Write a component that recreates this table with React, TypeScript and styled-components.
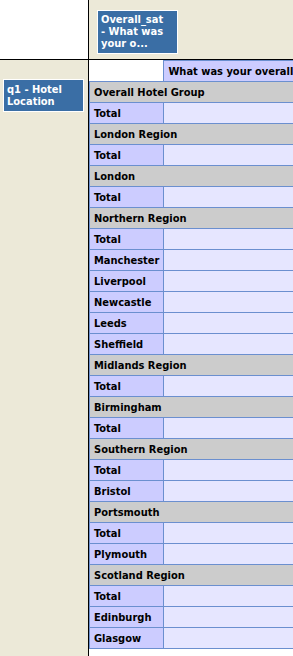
import React from "react";
import styled, { createGlobalStyle } from "styled-components";

const GlobalStyle = createGlobalStyle`
  html, body {
    margin: 0;
    padding: 0;
    overflow: hidden;
    background: #ffffff;
  }
  body {
    font-family: "DejaVu Sans Condensed", "DejaVu Sans", Tahoma, sans-serif;
    font-stretch: condensed;
    font-size: 11px;
  }
`;

const Layout = styled.div`
  display: grid;
  grid-template-columns: 89px 1fr;
  grid-template-rows: 60px 1fr;
  width: 293px;
  height: 656px;
  overflow: hidden;
`;

const Corner = styled.div`
  box-sizing: border-box;
  background: #ffffff;
  border-right: 1px solid #000000;
  border-bottom: 1px solid #000000;
`;

const ColumnZone = styled.div`
  box-sizing: border-box;
  background: #ece9d8;
  border-bottom: 1px solid #000000;
  padding: 10px 0 0 8px;
  overflow: hidden;
`;

const RowZone = styled.div`
  box-sizing: border-box;
  background: #ece9d8;
  border-right: 1px solid #000000;
  padding: 19px 0 0 3px;
`;

const FieldChip = styled.div<{ $top?: number; $bottom?: number }>`
  box-sizing: border-box;
  width: 81px;
  background: #3a6ea5;
  border: 1px solid #ffffff;
  color: #ffffff;
  font-weight: bold;
  line-height: 12px;
  padding: ${(p) => p.$top ?? 3}px 3px ${(p) => p.$bottom ?? 3}px 3px;
  white-space: nowrap;
  overflow: hidden;
`;

const ChipLine = styled.span`
  display: block;
`;

const BodyZone = styled.div`
  background: #ffffff;
  overflow: hidden;
`;

const Grid = styled.table`
  border-collapse: collapse;
  border-spacing: 0;
  font-weight: bold;
  color: #000000;
`;

const BlankCell = styled.td`
  width: 66px;
  height: 20px;
  padding: 0 4px;
  border: none;
  background: #ffffff;
`;

const HeadCell = styled.td`
  height: 20px;
  padding: 0 4px;
  border: 1px solid #6b8fcf;
  background: #ccccff;
  white-space: nowrap;
`;

const GroupCell = styled.td`
  height: 20px;
  padding: 0 4px;
  border: 1px solid #6b8fcf;
  background: #cccccc;
  white-space: nowrap;
`;

const LabelCell = styled.td`
  width: 66px;
  height: 20px;
  padding: 0 4px;
  border: 1px solid #6b8fcf;
  background: #ccccff;
  white-space: nowrap;
`;

const ValueCell = styled.td`
  height: 20px;
  padding: 0 4px;
  border: 1px solid #6b8fcf;
  background: #e6e6ff;
`;

const Footnote = styled.div`
  padding: 7px 0 0 58px;
  font-weight: normal;
  color: #555555;
  white-space: nowrap;
`;

type Row = { kind: "group" | "item"; label: string };

const rows: Row[] = [
  { kind: "group", label: "Overall Hotel Group" },
  { kind: "item", label: "Total" },
  { kind: "group", label: "London Region" },
  { kind: "item", label: "Total" },
  { kind: "group", label: "London" },
  { kind: "item", label: "Total" },
  { kind: "group", label: "Northern Region" },
  { kind: "item", label: "Total" },
  { kind: "item", label: "Manchester" },
  { kind: "item", label: "Liverpool" },
  { kind: "item", label: "Newcastle" },
  { kind: "item", label: "Leeds" },
  { kind: "item", label: "Sheffield" },
  { kind: "group", label: "Midlands Region" },
  { kind: "item", label: "Total" },
  { kind: "group", label: "Birmingham" },
  { kind: "item", label: "Total" },
  { kind: "group", label: "Southern Region" },
  { kind: "item", label: "Total" },
  { kind: "item", label: "Bristol" },
  { kind: "group", label: "Portsmouth" },
  { kind: "item", label: "Total" },
  { kind: "item", label: "Plymouth" },
  { kind: "group", label: "Scotland Region" },
  { kind: "item", label: "Total" },
  { kind: "item", label: "Edinburgh" },
  { kind: "item", label: "Glasgow" },
];

export default function App() {
  return (
    <>
      <GlobalStyle />
      <Layout>
        <Corner />
        <ColumnZone>
          <FieldChip>
            <ChipLine>Overall_sat</ChipLine>
            <ChipLine>- What was</ChipLine>
            <ChipLine>your o...</ChipLine>
          </FieldChip>
        </ColumnZone>
        <RowZone>
          <FieldChip $top={4} $bottom={3}>
            <ChipLine>q1 - Hotel</ChipLine>
            <ChipLine>Location</ChipLine>
          </FieldChip>
        </RowZone>
        <BodyZone>
          <Grid>
            <tbody>
              <tr>
                <BlankCell />
                <HeadCell>What was your overall satisfaction with your stay?</HeadCell>
              </tr>
              {rows.map((r, i) =>
                r.kind === "group" ? (
                  <tr key={i}>
                    <GroupCell colSpan={2}>{r.label}</GroupCell>
                  </tr>
                ) : (
                  <tr key={i}>
                    <LabelCell>{r.label}</LabelCell>
                    <ValueCell />
                  </tr>
                )
              )}
            </tbody>
          </Grid>
          <Footnote>Cells show the weighted count of all responses</Footnote>
        </BodyZone>
      </Layout>
    </>
  );
}
